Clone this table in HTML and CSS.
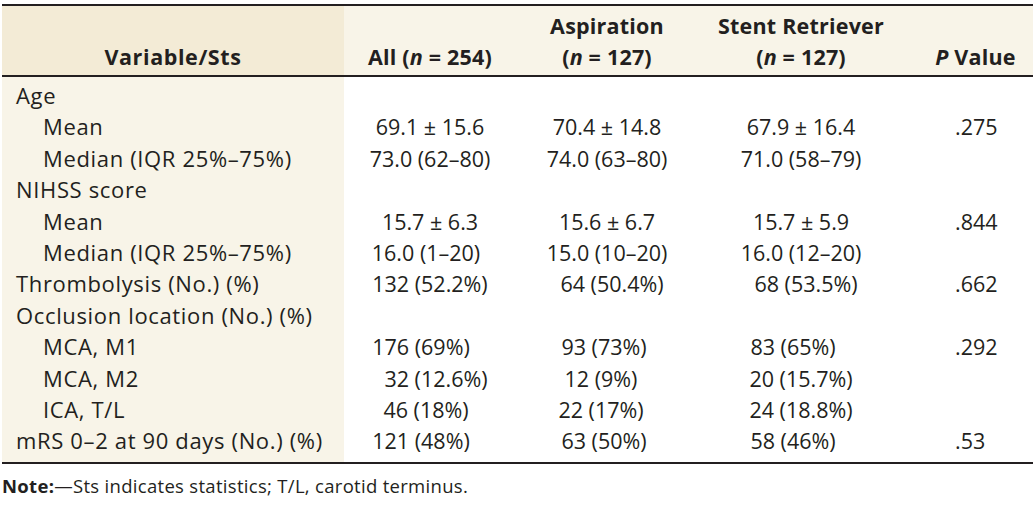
FILE: index.html
```html
<!DOCTYPE html>
<html lang="en">
<head>
<meta charset="utf-8">
<title>Table</title>
<link rel="stylesheet" href="styles.css">
</head>
<body>
<table class="data">
  <colgroup>
    <col class="c1"><col class="c2"><col class="c3"><col class="c4"><col class="c5">
  </colgroup>
  <thead>
    <tr>
      <th class="var">Variable/Sts</th>
      <th>All (<i>n</i> = 254)</th>
      <th>Aspiration<br>(<i>n</i> = 127)</th>
      <th>Stent Retriever<br>(<i>n</i> = 127)</th>
      <th class="pv"><i>P</i> Value</th>
    </tr>
  </thead>
  <tbody>
    <tr class="first"><td class="var">Age</td><td></td><td></td><td></td><td class="p"></td></tr>
    <tr><td class="var sub">Mean</td><td>69.1 ± 15.6</td><td>70.4 ± 14.8</td><td>67.9 ± 16.4</td><td class="p">.275</td></tr>
    <tr><td class="var sub">Median (IQR 25%–75%)</td><td>73.0 (62–80)</td><td>74.0 (63–80)</td><td>71.0 (58–79)</td><td class="p"></td></tr>
    <tr><td class="var">NIHSS score</td><td></td><td></td><td></td><td class="p"></td></tr>
    <tr><td class="var sub">Mean</td><td>15.7 ± 6.3</td><td>15.6 ± 6.7</td><td>15.7 ± 5.9</td><td class="p">.844</td></tr>
    <tr><td class="var sub">Median (IQR 25%–75%)</td><td class="l4">16.0 (1–20)</td><td>15.0 (10–20)</td><td>16.0 (12–20)</td><td class="p"></td></tr>
    <tr><td class="var">Thrombolysis (No.) (%)</td><td>132 (52.2%)</td><td class="r5">64 (50.4%)</td><td class="r5">68 (53.5%)</td><td class="p">.662</td></tr>
    <tr><td class="var">Occlusion location (No.) (%)</td><td></td><td></td><td></td><td class="p"></td></tr>
    <tr><td class="var sub">MCA, M1</td><td class="l9">176 (69%)</td><td class="l3">93 (73%)</td><td class="l8">83 (65%)</td><td class="p">.292</td></tr>
    <tr><td class="var sub">MCA, M2</td><td class="r6">32 (12.6%)</td><td class="l6">12 (9%)</td><td>20 (15.7%)</td><td class="p"></td></tr>
    <tr><td class="var sub">ICA, T/L</td><td class="l4">46 (18%)</td><td class="l6">22 (17%)</td><td>24 (18.8%)</td><td class="p"></td></tr>
    <tr class="last"><td class="var">mRS 0–2 at 90 days (No.) (%)</td><td class="l9">121 (48%)</td><td class="l3">63 (50%)</td><td class="l8">58 (46%)</td><td class="p">.53</td></tr>
  </tbody>
</table>
<p class="note"><b>Note:</b>—Sts indicates statistics; T/L, carotid terminus.</p>
</body>
</html>
```
FILE: styles.css
```css
html, body {
  margin: 0;
  padding: 0;
  background: #ffffff;
}

body {
  font-family: "Open Sans", "Liberation Sans", sans-serif;
  color: #231f20;
}

.data {
  margin: 4px 0 0 2px;
  width: 1031px;
  table-layout: fixed;
  border-collapse: collapse;
  font-size: 21.5px;
}

.c1 { width: 342px; }
.c2 { width: 172px; }
.c3 { width: 182px; }
.c4 { width: 206px; }
.c5 { width: 129px; }

.data thead tr {
  border-top: 2px solid #231f20;
  border-bottom: 2px solid #231f20;
}

.data th {
  font-weight: 700;
  line-height: 31px;
  padding: 4px 0 3px;
  text-align: center;
  vertical-align: bottom;
  background: #f8f4e8;
  letter-spacing: 0.2px;
}

.data th.var {
  background: #f3ebd6;
  letter-spacing: 0.6px;
}

.data th.pv {
  padding-left: 14px;
}

.data tbody {
  border-bottom: 2px solid #231f20;
}

.data td {
  line-height: 31.4px;
  padding: 0;
  text-align: center;
  white-space: nowrap;
}

.data tr.first td { padding-top: 3px; }
.data tr.last td { padding-bottom: 5px; }

.data td.var {
  text-align: left;
  padding-left: 14px;
  background: #f8f4e8;
  font-size: 22px;
  letter-spacing: 0.65px;
}

.data td.sub {
  padding-left: 41px;
}

.data td.p {
  text-align: left;
  padding-left: 51px;
}

.l3 { padding-right: 6px !important; }
.l4 { padding-right: 8px !important; }
.l6 { padding-right: 12px !important; }
.l8 { padding-right: 16px !important; }
.l9 { padding-right: 18px !important; }
.r5 { padding-left: 10px !important; }
.r6 { padding-left: 12px !important; }

.note {
  margin: 12px 0 0 2px;
  font-size: 18.5px;
  line-height: 20px;
  letter-spacing: 0.3px;
}

.note b {
  font-weight: 700;
}
```
